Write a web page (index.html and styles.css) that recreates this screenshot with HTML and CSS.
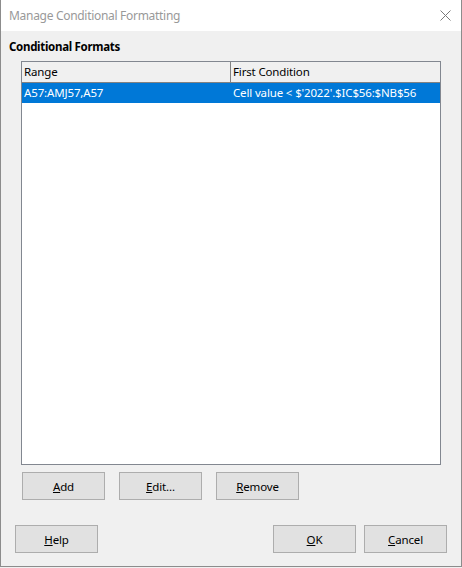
FILE: index.html
```html
<!DOCTYPE html>
<html lang="en">
<head>
    <meta charset="UTF-8">
    <meta name="viewport" content="width=device-width, initial-scale=1.0">
    <title>Manage Conditional Formatting</title>
    <link rel="stylesheet" href="styles.css">
</head>
<body>
    <div class="window">
        <div class="titlebar">
            <span class="title">Manage Conditional Formatting</span>
            <svg class="close" width="12" height="12" viewBox="0 0 12 12">
                <path d="M0.5 0.5 L10.5 10.5 M10.5 0.5 L0.5 10.5" stroke="#7a7a7a" stroke-width="1" fill="none"/>
            </svg>
        </div>

        <div class="content">
            <h3 class="section">Conditional Formats</h3>

            <div class="list">
                <div class="list-head">
                    <div class="col col-range">Range</div>
                    <div class="col col-cond">First Condition</div>
                </div>
                <div class="row selected">
                    <div class="col col-range">A57:AMJ57,A57</div>
                    <div class="col col-cond">Cell value &lt; $'2022'.$IC$56:$NB$56</div>
                </div>
            </div>

            <div class="list-buttons">
                <button class="btn"><u>A</u>dd</button>
                <button class="btn"><u>E</u>dit...</button>
                <button class="btn"><u>R</u>emove</button>
            </div>
        </div>

        <div class="footer">
            <button class="btn"><u>H</u>elp</button>
            <div class="spacer"></div>
            <button class="btn"><u>O</u>K</button>
            <button class="btn"><u>C</u>ancel</button>
        </div>
    </div>
</body>
</html>
```

FILE: styles.css
```css
html {
    background: #f0f0f0;
}
body {
    margin: 0;
    font-family: "Noto Sans", sans-serif;
    font-size: 11.5px;
    letter-spacing: -0.15px;
    color: #000;
}
.window {
    width: 460px;
    height: 566px;
    background: #f0f0f0;
    border-left: 1px solid #8c8c8c;
    border-right: 1px solid #8c8c8c;
    border-bottom: 1px solid #8c8c8c;
    display: flex;
    flex-direction: column;
}
.titlebar {
    height: 31px;
    background: #fff;
    display: flex;
    align-items: center;
    padding-left: 8px;
    padding-right: 8px;
}
.title {
    flex: 1;
    color: #999;
    font-size: 12px;
    letter-spacing: -0.3px;
}
.close {
    margin-right: 1px;
    margin-top: 1px;
}
.content {
    padding: 8px 0 0 8px;
    flex: 1;
}
.section {
    margin: 0;
    font-size: 11.5px;
    font-weight: bold;
    letter-spacing: -0.3px;
    line-height: 16px;
}
.list {
    margin-top: 6px;
    margin-left: 12px;
    width: 418px;
    height: 402px;
    border: 1px solid #828790;
    background: #fff;
}
.list-head {
    display: flex;
    height: 20px;
    background: #f0f0f0;
    border-bottom: 1px solid #828282;
}
.list-head .col-range {
    border-right: 1px solid #828282;
}
.row {
    display: flex;
    height: 20px;
}
.row.selected {
    background: #0078d7;
    color: #fff;
}
.col {
    line-height: 20px;
    padding-left: 2px;
    white-space: nowrap;
}
.col-range {
    width: 207px;
}
.list-head .col-range {
    width: 206px;
}
.col-cond {
    flex: 1;
}
.list-buttons {
    display: flex;
    gap: 14px;
    margin-top: 7px;
    margin-left: 13px;
}
.btn {
    width: 83px;
    height: 28px;
    background: #e1e1e1;
    border: 1px solid #adadad;
    font-family: "Noto Sans", sans-serif;
    font-size: 11.5px;
    letter-spacing: -0.15px;
    color: #000;
    padding: 0;
}
.footer {
    display: flex;
    gap: 8px;
    padding: 0 14px 13px 14px;
}
.spacer {
    flex: 1;
}
```
